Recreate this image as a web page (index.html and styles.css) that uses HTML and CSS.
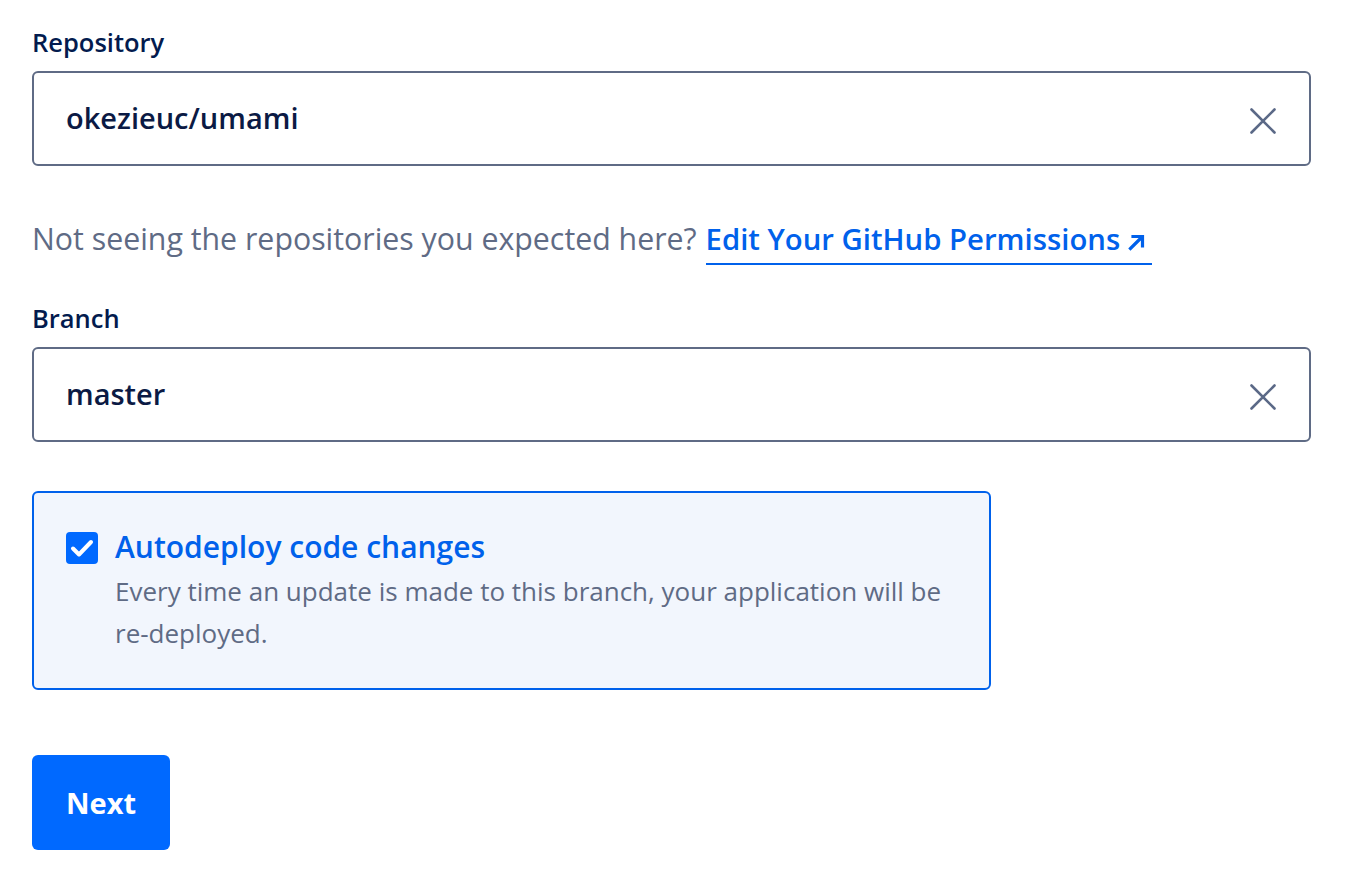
FILE: index.html
```html
<!DOCTYPE html>
<html>
<head>
<meta charset="utf-8">
<link rel="stylesheet" href="styles.css">
</head>
<body>
<main class="form">
  <label class="field-label">Repository</label>
  <div class="select">
    <span class="select-value">okezieuc/umami</span>
    <svg class="clear" width="26" height="26" viewBox="0 0 26 26"><path d="M1.5 1.5 L24.5 24.5 M24.5 1.5 L1.5 24.5" stroke="#5b6987" stroke-width="2.6" stroke-linecap="round" fill="none"/></svg>
  </div>
  <p class="help">Not seeing the repositories you expected here? <a class="ext-link" href="#">Edit Your GitHub Permissions<svg class="arrow" width="18" height="18" viewBox="0 0 18 18"><path d="M2.5 15.5 L13.5 4.5 M5 3.5 H14.5 V13" stroke="#0061eb" stroke-width="3.2" fill="none" stroke-linecap="square"/></svg></a></p>

  <label class="field-label">Branch</label>
  <div class="select">
    <span class="select-value">master</span>
    <svg class="clear" width="26" height="26" viewBox="0 0 26 26"><path d="M1.5 1.5 L24.5 24.5 M24.5 1.5 L1.5 24.5" stroke="#5b6987" stroke-width="2.6" stroke-linecap="round" fill="none"/></svg>
  </div>

  <div class="option-card">
    <span class="checkbox"><svg width="32" height="32" viewBox="0 0 32 32"><path d="M7 16.5 L13 22.5 L25 10" stroke="#fff" stroke-width="4" fill="none" stroke-linecap="round" stroke-linejoin="round"/></svg></span>
    <div class="option-text">
      <div class="option-title">Autodeploy code changes</div>
      <div class="option-desc">Every time an update is made to this branch, your application will be re-deployed.</div>
    </div>
  </div>

  <button class="btn-primary">Next</button>
</main>
</body>
</html>
```
FILE: styles.css
```css
html, body {
  margin: 0;
  padding: 0;
  background: #ffffff;
}
body {
  font-family: "Open Sans", "Liberation Sans", sans-serif;
  color: #031b4e;
}
.form {
  width: 1279px;
  padding: 27px 0 0 32px;
  display: flex;
  flex-direction: column;
  align-items: flex-start;
}
.field-label {
  display: block;
  font-size: 25.5px;
  font-weight: 600;
  line-height: 30px;
  color: #031b4e;
  margin-bottom: 14px;
}
.select {
  box-sizing: border-box;
  width: 1279px;
  height: 95px;
  border: 2px solid #5f6b85;
  border-radius: 6px;
  padding: 0 33px 0 32px;
  display: flex;
  align-items: center;
  justify-content: space-between;
}
.select-value {
  font-size: 29px;
  font-weight: 600;
  color: #0b1a44;
  line-height: 36px;
  margin-top: -2px;
}
.clear {
  display: block;
  margin-top: 4px;
}
.help {
  margin: 53px 0 38px 0;
  font-size: 30.3px;
  line-height: 40px;
  color: #5f6b85;
  white-space: nowrap;
}
.ext-link {
  display: inline-block;
  margin-left: 1px;
  color: #0061eb;
  font-weight: 600;
  font-size: 29.3px;
  text-decoration: none;
  line-height: 40px;
  padding-bottom: 4px;
  border-bottom: 2px solid #0061eb;
  padding-right: 6px;
}
.arrow {
  display: inline-block;
  margin-left: 8px;
  vertical-align: -1px;
}
.option-card {
  box-sizing: border-box;
  width: 959px;
  height: 199px;
  margin-top: 49px;
  border: 2px solid #0061eb;
  border-radius: 6px;
  background: #f2f6fd;
  padding: 36px 34px 0 32px;
  display: flex;
  gap: 17px;
}
.checkbox {
  flex: none;
  width: 32px;
  height: 32px;
  margin-top: 3px;
  background: #0069ff;
  border-radius: 4px;
  display: flex;
}
.option-title {
  font-size: 30px;
  font-weight: 600;
  line-height: 36px;
  color: #0061eb;
}
.option-desc {
  margin-top: 5px;
  font-size: 26px;
  line-height: 42px;
  color: #5f6b85;
}
.btn-primary {
  margin-top: 65px;
  width: 138px;
  height: 95px;
  border: none;
  border-radius: 6px;
  background: #0069ff;
  color: #ffffff;
  font-family: "Open Sans", "Liberation Sans", sans-serif;
  font-size: 29px;
  font-weight: 700;
  padding: 0;
}
```
